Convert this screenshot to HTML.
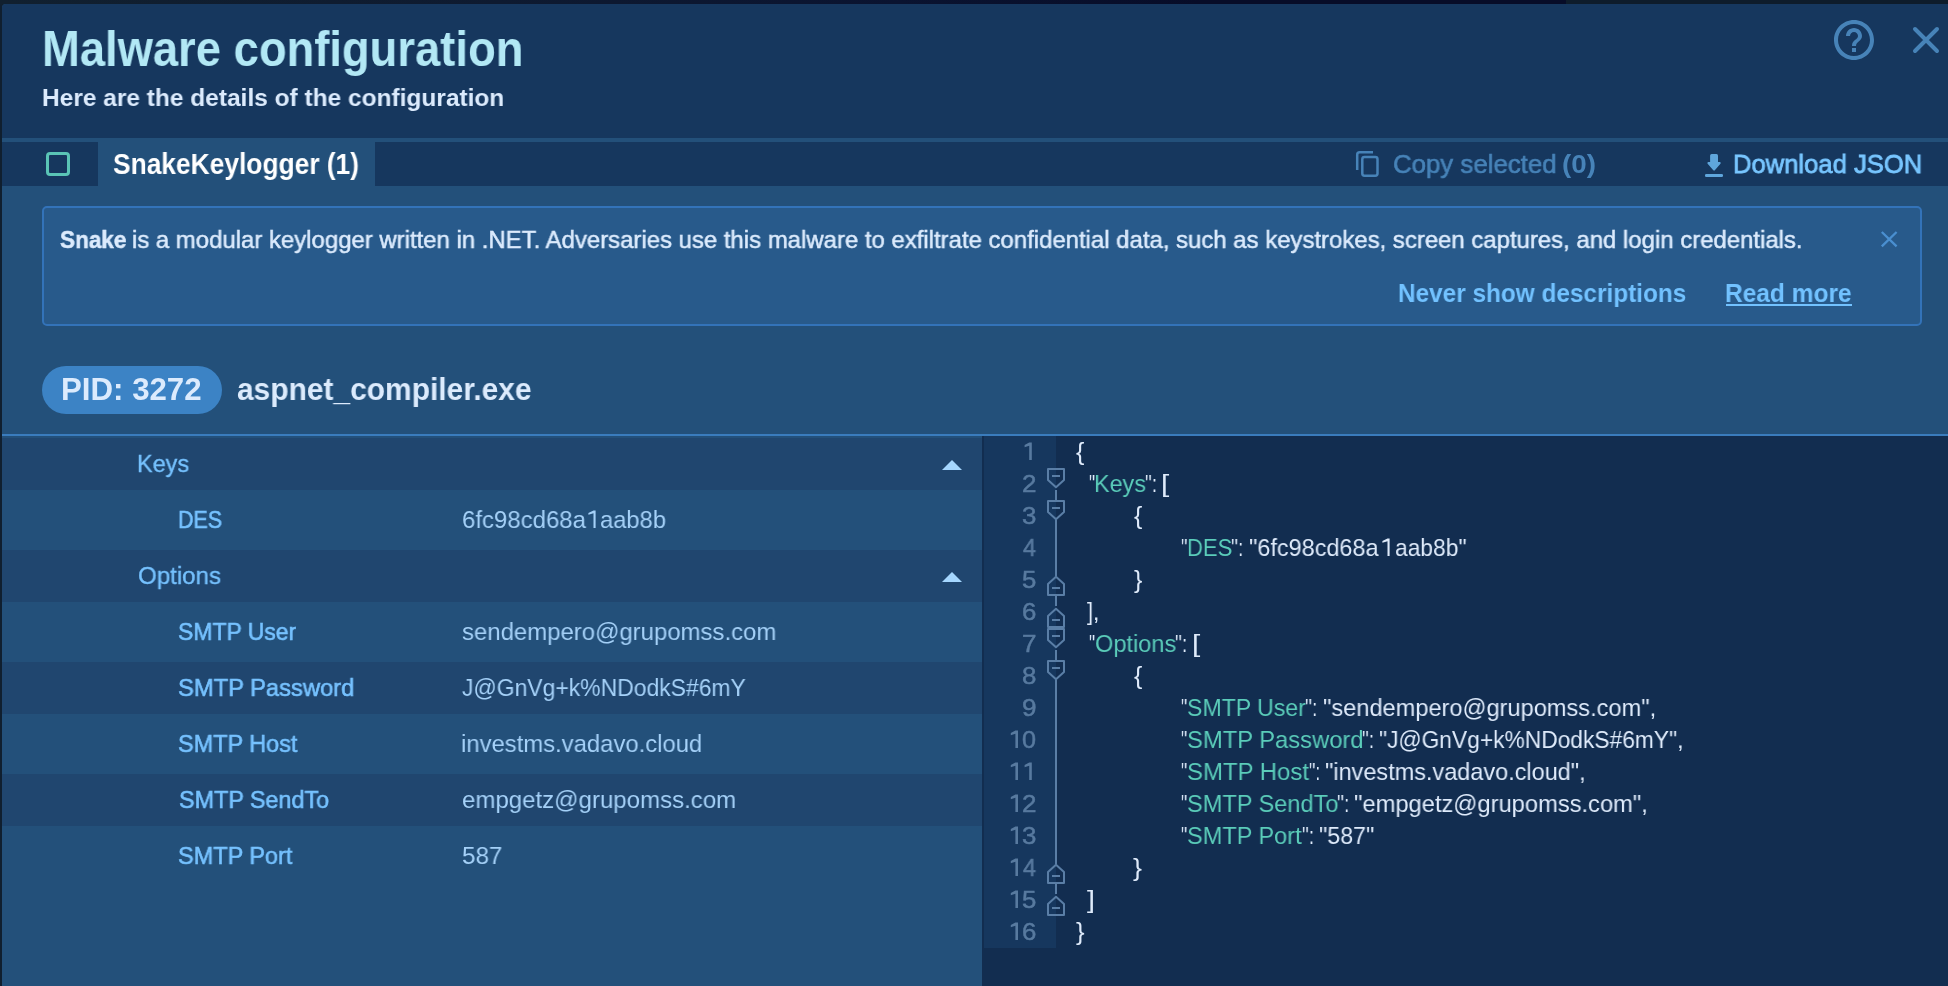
<!DOCTYPE html>
<html><head><meta charset="utf-8"><title>Malware configuration</title>
<style>
html,body{margin:0;padding:0;}
body{width:1948px;height:986px;overflow:hidden;background:#101f2f;position:relative;font-family:"Liberation Sans", sans-serif;}
.abs{position:absolute;}
.t{position:absolute;white-space:nowrap;line-height:1;transform-origin:0 0;display:block;will-change:transform;}
</style></head><body>
<div class="abs" style="left:0;top:0;width:1948px;height:5px;background:linear-gradient(90deg,#11202f 0,#0e1a30 500px,#0a1330 900px,#070c28 1200px,#070c28 1566px,#0e1c2b 1566px)"></div>
<div class="abs" style="left:2px;top:4px;width:1946px;height:982px;background:#23507a;border-radius:4px 0 0 0;overflow:hidden">
  <div class="abs" style="left:0;top:0;width:1946px;height:134px;background:#16375e"></div>
  <div class="abs" style="left:0;top:138px;width:1946px;height:44px;background:#16375e"></div>
  <div class="abs" style="left:96px;top:138px;width:277px;height:44px;background:#23507a"></div>
</div>
<div class="abs" style="left:46px;top:152px;width:18px;height:18px;border:3px solid #5ac4b6;border-radius:4px"></div>
<div class="abs" style="left:42px;top:206px;width:1876px;height:116px;border:2px solid #3373b9;border-radius:5px;background:#285a8b"></div>
<div class="abs" style="left:1726px;top:304px;width:126px;height:2px;background:#72c2ff"></div>
<div class="abs" style="left:42px;top:366px;width:180px;height:48px;border-radius:24px;background:#3c83c5"></div>
<div class="abs" style="left:2px;top:434px;width:1946px;height:2px;background:#3a7cbd"></div>
<div class="abs" style="left:2px;top:438px;width:980px;height:52px;background:#20466f"></div>
<div class="abs" style="left:2px;top:550px;width:980px;height:52px;background:#20466f"></div>
<div class="abs" style="left:2px;top:662px;width:980px;height:52px;background:#20466f"></div>
<div class="abs" style="left:2px;top:774px;width:980px;height:52px;background:#20466f"></div>
<div class="abs" style="left:982px;top:436px;width:966px;height:550px;background:#122d50"></div>
<div class="abs" style="left:984px;top:436px;width:72px;height:512px;background:#16375e"></div>
<svg class="abs" style="left:0;top:0" width="1948" height="986" viewBox="0 0 1948 986" fill="none" stroke="#5a7ea6" stroke-width="2" stroke-linejoin="round"><path d="M1048 469H1064V480L1056 487.3L1048 480Z"/><path d="M1052 476H1060"/><path d="M1048 501H1064V512L1056 519.3L1048 512Z"/><path d="M1052 508H1060"/><path d="M1048 629H1064V640L1056 647.3L1048 640Z"/><path d="M1052 636H1060"/><path d="M1048 661H1064V672L1056 679.3L1048 672Z"/><path d="M1052 668H1060"/><path d="M1056 576.7L1064 584V595H1048V584Z"/><path d="M1052 588H1060"/><path d="M1056 608.7L1064 616V627H1048V616Z"/><path d="M1052 620H1060"/><path d="M1056 864.7L1064 872V883H1048V872Z"/><path d="M1052 876H1060"/><path d="M1056 896.7L1064 904V915H1048V904Z"/><path d="M1052 908H1060"/><path d="M1056 490V500"/><path d="M1056 520V576"/><path d="M1056 596V606"/><path d="M1056 650V660"/><path d="M1056 680V864"/><path d="M1056 884V894"/></svg>
<svg class="abs" style="left:0;top:0" width="1948" height="986" viewBox="0 0 1948 986" fill="#587a9f"><path fill="#a5d1f8" d="M593.5 510.4H595.6V528H593.5V513.2L588.4 514.8V513Z"/><path fill="#587a9f" d="M1029.2 442.4H1031.8V460H1029.2V445.7L1024.6 447.3V445Z"/><path fill="#587a9f" d="M1015.4 730.4H1018V748H1015.4V733.7L1010.8 735.3V733Z"/><path fill="#587a9f" d="M1015.4 762.4H1018V780H1015.4V765.7L1010.8 767.3V765Z"/><path fill="#587a9f" d="M1029.2 762.4H1031.8V780H1029.2V765.7L1024.6 767.3V765Z"/><path fill="#587a9f" d="M1015.4 794.4H1018V812H1015.4V797.7L1010.8 799.3V797Z"/><path fill="#587a9f" d="M1015.4 826.4H1018V844H1015.4V829.7L1010.8 831.3V829Z"/><path fill="#587a9f" d="M1015.4 858.4H1018V876H1015.4V861.7L1010.8 863.3V861Z"/><path fill="#587a9f" d="M1015.4 890.4H1018V908H1015.4V893.7L1010.8 895.3V893Z"/><path fill="#587a9f" d="M1015.4 922.4H1018V940H1015.4V925.7L1010.8 927.3V925Z"/><path fill="#dfebfb" d="M1387.5 538.4H1389.6V556H1387.5V541.2L1382.4 542.8V541Z"/></svg>
<svg class="abs" style="left:0;top:0" width="1948" height="986" viewBox="0 0 1948 986">
  <g transform="translate(1830 16) scale(2)" fill="#4783b8"><path d="M11 18h2v-2h-2v2zm1-16C6.48 2 2 6.48 2 12s4.48 10 10 10 10-4.48 10-10S17.52 2 12 2zm0 18c-4.41 0-8-3.59-8-8s3.59-8 8-8 8 3.59 8 8-3.59 8-8 8zm0-14c-2.21 0-4 1.79-4 4h2c0-1.1.9-2 2-2s2 .9 2 2c0 2-3 1.75-3 5h2c0-2.25 3-2.5 3-5 0-2.21-1.79-4-4-4z"/></g>
  <path d="M1915 29L1937 51M1937 29L1915 51" stroke="#4783b8" stroke-width="4" stroke-linecap="round" fill="none"/>
  <g fill="none" stroke="#4783b8" stroke-width="2.5">
    <path d="M1357.2 170V154.7a2.5 2.5 0 0 1 2.5-2.5H1373"/>
    <rect x="1362.3" y="157" width="15.2" height="18.8" rx="2.2"/>
  </g>
  <g fill="#5fa6dc">
    <path d="M1710.1 155.5a1.5 1.5 0 0 1 1.5-1.5h4.9a1.5 1.5 0 0 1 1.5 1.5V163h-7.9Z"/>
    <path d="M1708.4 163.1H1719.7L1714.05 169.6Z" stroke="#5fa6dc" stroke-width="2" stroke-linejoin="round"/>
    <rect x="1705" y="174" width="18" height="3" rx="1.2"/>
  </g>
  <path d="M1881.8 232L1896.6 246.4M1896.6 232L1881.8 246.4" stroke="#4a8fd0" stroke-width="2.3" fill="none"/>
  <path d="M942 470L952 460L962 470Z" fill="#a5d7ff"/>
  <path d="M942 582L952 572L962 582Z" fill="#a5d7ff"/>
</svg>
<span class="t" style="left:42.23px;top:24.00px;font-size:49.2px;font-weight:700;color:#b2e8f5;transform:scaleX(0.9222)">Malware configuration</span>
<span class="t" style="left:42.00px;top:86.00px;font-size:24.6px;font-weight:700;color:#dcebfd;transform:scaleX(0.9950)">Here are the details of the configuration</span>
<span class="t" style="left:113.42px;top:150.00px;font-size:28.7px;font-weight:700;color:#ffffff;transform:scaleX(0.9185)">SnakeKeylogger (1)</span>
<span class="t" style="left:1392.81px;top:151.00px;font-size:26.65px;font-weight:400;color:#4783b8;-webkit-text-stroke:0.6px #4783b8;transform:scaleX(0.9689)">Copy selected</span>
<span class="t" style="left:1562.25px;top:151.00px;font-size:26.65px;font-weight:700;color:#4783b8;transform:scaleX(1.0431)">(0)</span>
<span class="t" style="left:1732.96px;top:151.00px;font-size:26.65px;font-weight:400;color:#78c6ff;-webkit-text-stroke:0.8px #78c6ff;transform:scaleX(0.9607)">Download JSON</span>
<span class="t" style="left:59.82px;top:228.00px;font-size:24.6px;font-weight:700;color:#dcebfd;-webkit-text-stroke:0.5px #dcebfd;transform:scaleX(0.9169)">Snake</span>
<span class="t" style="left:132.18px;top:228.00px;font-size:24.6px;font-weight:400;color:#dcebfd;-webkit-text-stroke:0.5px #dcebfd;transform:scaleX(0.9730)">is a modular keylogger written in .NET. Adversaries use this malware to exfiltrate confidential data, such as keystrokes, screen captures, and login credentials.</span>
<span class="t" style="left:1398.08px;top:280.00px;font-size:26.65px;font-weight:700;color:#72c2ff;transform:scaleX(0.9143)">Never show descriptions</span>
<span class="t" style="left:1725.48px;top:280.00px;font-size:26.65px;font-weight:700;color:#72c2ff;transform:scaleX(0.9200)">Read more</span>
<span class="t" style="left:61.41px;top:375.00px;font-size:30.75px;font-weight:700;color:#dcebfd;transform:scaleX(1.0156)">PID: 3272</span>
<span class="t" style="left:237.39px;top:375.00px;font-size:30.75px;font-weight:700;color:#dcebfd;transform:scaleX(0.9736)">aspnet_compiler.exe</span>
<span class="t" style="left:136.87px;top:452.00px;font-size:24.6px;font-weight:400;color:#76c2ff;-webkit-text-stroke:0.35px #76c2ff;transform:scaleX(0.9524)">Keys</span>
<span class="t" style="left:177.73px;top:508.00px;font-size:24.6px;font-weight:400;color:#76c2ff;-webkit-text-stroke:0.6px #76c2ff;transform:scaleX(0.8700)">DES</span>
<span class="t" style="left:461.81px;top:508.00px;font-size:24.6px;font-weight:400;color:#a5d1f8;transform:scaleX(0.9745)">6fc98cd68a</span>
<span class="t" style="left:600.32px;top:508.00px;font-size:24.6px;font-weight:400;color:#a5d1f8;transform:scaleX(0.9648)">aab8b</span>
<span class="t" style="left:138.01px;top:564.00px;font-size:24.6px;font-weight:400;color:#76c2ff;-webkit-text-stroke:0.35px #76c2ff;transform:scaleX(0.9796)">Options</span>
<span class="t" style="left:177.95px;top:620.00px;font-size:24.6px;font-weight:400;color:#76c2ff;-webkit-text-stroke:0.6px #76c2ff;transform:scaleX(0.9330)">SMTP User</span>
<span class="t" style="left:461.56px;top:620.00px;font-size:24.6px;font-weight:400;color:#a5d1f8;transform:scaleX(0.9733)">sendempero@grupomss.com</span>
<span class="t" style="left:177.89px;top:676.00px;font-size:24.6px;font-weight:400;color:#76c2ff;-webkit-text-stroke:0.6px #76c2ff;transform:scaleX(0.9651)">SMTP Password</span>
<span class="t" style="left:461.59px;top:676.00px;font-size:24.6px;font-weight:400;color:#a5d1f8;transform:scaleX(0.9322)">J@GnVg+k%NDodkS#6mY</span>
<span class="t" style="left:178.28px;top:732.00px;font-size:24.6px;font-weight:400;color:#76c2ff;-webkit-text-stroke:0.6px #76c2ff;transform:scaleX(0.9524)">SMTP Host</span>
<span class="t" style="left:461.17px;top:732.00px;font-size:24.6px;font-weight:400;color:#a5d1f8;transform:scaleX(0.9697)">investms.vadavo.cloud</span>
<span class="t" style="left:178.55px;top:788.00px;font-size:24.6px;font-weight:400;color:#76c2ff;-webkit-text-stroke:0.6px #76c2ff;transform:scaleX(0.9491)">SMTP SendTo</span>
<span class="t" style="left:462.00px;top:788.00px;font-size:24.6px;font-weight:400;color:#a5d1f8;transform:scaleX(0.9772)">empgetz@grupomss.com</span>
<span class="t" style="left:177.89px;top:844.00px;font-size:24.6px;font-weight:400;color:#76c2ff;-webkit-text-stroke:0.6px #76c2ff;transform:scaleX(0.9544)">SMTP Port</span>
<span class="t" style="left:461.99px;top:844.00px;font-size:24.6px;font-weight:400;color:#a5d1f8;transform:scaleX(0.9854)">587</span>
<span class="t" style="left:1022.22px;top:472.00px;font-size:24.6px;font-weight:400;color:#587a9f;-webkit-text-stroke:0.5px #587a9f;transform:scaleX(1.0582)">2</span>
<span class="t" style="left:1021.85px;top:504.00px;font-size:24.6px;font-weight:400;color:#587a9f;-webkit-text-stroke:0.5px #587a9f;transform:scaleX(1.0532)">3</span>
<span class="t" style="left:1023.03px;top:536.00px;font-size:24.6px;font-weight:400;color:#587a9f;-webkit-text-stroke:0.5px #587a9f;transform:scaleX(0.9557)">4</span>
<span class="t" style="left:1022.26px;top:568.00px;font-size:24.6px;font-weight:400;color:#587a9f;-webkit-text-stroke:0.5px #587a9f;transform:scaleX(1.0480)">5</span>
<span class="t" style="left:1021.84px;top:600.00px;font-size:24.6px;font-weight:400;color:#587a9f;-webkit-text-stroke:0.5px #587a9f;transform:scaleX(1.0503)">6</span>
<span class="t" style="left:1022.20px;top:632.00px;font-size:24.6px;font-weight:400;color:#587a9f;-webkit-text-stroke:0.5px #587a9f;transform:scaleX(1.0592)">7</span>
<span class="t" style="left:1022.26px;top:664.00px;font-size:24.6px;font-weight:400;color:#587a9f;-webkit-text-stroke:0.5px #587a9f;transform:scaleX(1.0528)">8</span>
<span class="t" style="left:1022.19px;top:696.00px;font-size:24.6px;font-weight:400;color:#587a9f;-webkit-text-stroke:0.5px #587a9f;transform:scaleX(1.0610)">9</span>
<span class="t" style="left:1022.12px;top:728.00px;font-size:24.6px;font-weight:400;color:#587a9f;-webkit-text-stroke:0.5px #587a9f;transform:scaleX(1.0251)">0</span>
<span class="t" style="left:1022.22px;top:792.00px;font-size:24.6px;font-weight:400;color:#587a9f;-webkit-text-stroke:0.5px #587a9f;transform:scaleX(1.0582)">2</span>
<span class="t" style="left:1021.85px;top:824.00px;font-size:24.6px;font-weight:400;color:#587a9f;-webkit-text-stroke:0.5px #587a9f;transform:scaleX(1.0532)">3</span>
<span class="t" style="left:1023.03px;top:856.00px;font-size:24.6px;font-weight:400;color:#587a9f;-webkit-text-stroke:0.5px #587a9f;transform:scaleX(0.9557)">4</span>
<span class="t" style="left:1022.26px;top:888.00px;font-size:24.6px;font-weight:400;color:#587a9f;-webkit-text-stroke:0.5px #587a9f;transform:scaleX(1.0480)">5</span>
<span class="t" style="left:1021.84px;top:920.00px;font-size:24.6px;font-weight:400;color:#587a9f;-webkit-text-stroke:0.5px #587a9f;transform:scaleX(1.0503)">6</span>
<span class="t" style="left:1075.54px;top:440.00px;font-size:24.6px;font-weight:400;color:#dfebfb;transform:scaleX(1.0243)">{</span>
<span class="t" style="left:1133.97px;top:504.00px;font-size:24.6px;font-weight:400;color:#dfebfb;transform:scaleX(1.0198)">{</span>
<span class="t" style="left:1133.97px;top:568.00px;font-size:24.6px;font-weight:400;color:#dfebfb;transform:scaleX(1.0206)">}</span>
<span class="t" style="left:1087.46px;top:600.00px;font-size:24.6px;font-weight:400;color:#dfebfb;transform:scaleX(0.8997)">],</span>
<span class="t" style="left:1133.97px;top:664.00px;font-size:24.6px;font-weight:400;color:#dfebfb;transform:scaleX(1.0198)">{</span>
<span class="t" style="left:1133.21px;top:856.00px;font-size:24.6px;font-weight:400;color:#dfebfb;transform:scaleX(1.0933)">}</span>
<span class="t" style="left:1087.47px;top:888.00px;font-size:24.6px;font-weight:400;color:#dfebfb;transform:scaleX(1.1591)">]</span>
<span class="t" style="left:1076.03px;top:920.00px;font-size:24.6px;font-weight:400;color:#dfebfb;transform:scaleX(1.0437)">}</span>
<span class="t" style="left:1088.66px;top:472.00px;font-size:24.6px;font-weight:400;color:#dfebfb;transform:scaleX(0.6917)">"</span>
<span class="t" style="left:1094.24px;top:472.00px;font-size:24.6px;font-weight:400;color:#5bcdba;transform:scaleX(0.9490)">Keys</span>
<span class="t" style="left:1145.19px;top:472.00px;font-size:24.6px;font-weight:400;color:#dfebfb;transform:scaleX(0.7737)">":</span>
<span class="t" style="left:1161.33px;top:472.00px;font-size:24.6px;font-weight:400;color:#dfebfb;transform:scaleX(1.2101)">[</span>
<span class="t" style="left:1180.97px;top:536.00px;font-size:24.6px;font-weight:400;color:#dfebfb;transform:scaleX(0.7278)">"</span>
<span class="t" style="left:1186.87px;top:536.00px;font-size:24.6px;font-weight:400;color:#5bcdba;transform:scaleX(0.8947)">DES</span>
<span class="t" style="left:1230.97px;top:536.00px;font-size:24.6px;font-weight:400;color:#dfebfb;transform:scaleX(0.7942)">":</span>
<span class="t" style="left:1249.22px;top:536.00px;font-size:24.6px;font-weight:400;color:#dfebfb;transform:scaleX(0.9532)">"6fc98cd68a</span>
<span class="t" style="left:1394.87px;top:536.00px;font-size:24.6px;font-weight:400;color:#dfebfb;transform:scaleX(0.9272)">aab8b"</span>
<span class="t" style="left:1088.66px;top:632.00px;font-size:24.6px;font-weight:400;color:#dfebfb;transform:scaleX(0.6917)">"</span>
<span class="t" style="left:1094.95px;top:632.00px;font-size:24.6px;font-weight:400;color:#5bcdba;transform:scaleX(0.9584)">Options</span>
<span class="t" style="left:1175.07px;top:632.00px;font-size:24.6px;font-weight:400;color:#dfebfb;transform:scaleX(0.7856)">":</span>
<span class="t" style="left:1192.33px;top:632.00px;font-size:24.6px;font-weight:400;color:#dfebfb;transform:scaleX(1.2101)">[</span>
<span class="t" style="left:1181.19px;top:696.00px;font-size:24.6px;font-weight:400;color:#dfebfb;transform:scaleX(0.7060)">"</span>
<span class="t" style="left:1187.23px;top:696.00px;font-size:24.6px;font-weight:400;color:#5bcdba;transform:scaleX(0.9381)">SMTP User</span>
<span class="t" style="left:1305.28px;top:696.00px;font-size:24.6px;font-weight:400;color:#dfebfb;transform:scaleX(0.7942)">":</span>
<span class="t" style="left:1322.64px;top:696.00px;font-size:24.6px;font-weight:400;color:#dfebfb;transform:scaleX(0.9593)">"sendempero@grupomss.com",</span>
<span class="t" style="left:1181.19px;top:728.00px;font-size:24.6px;font-weight:400;color:#dfebfb;transform:scaleX(0.7060)">"</span>
<span class="t" style="left:1186.79px;top:728.00px;font-size:24.6px;font-weight:400;color:#5bcdba;transform:scaleX(0.9664)">SMTP Password</span>
<span class="t" style="left:1361.99px;top:728.00px;font-size:24.6px;font-weight:400;color:#dfebfb;transform:scaleX(0.7737)">":</span>
<span class="t" style="left:1379.45px;top:728.00px;font-size:24.6px;font-weight:400;color:#dfebfb;transform:scaleX(0.9260)">"J@GnVg+k%NDodkS#6mY",</span>
<span class="t" style="left:1181.19px;top:760.00px;font-size:24.6px;font-weight:400;color:#dfebfb;transform:scaleX(0.7060)">"</span>
<span class="t" style="left:1186.53px;top:760.00px;font-size:24.6px;font-weight:400;color:#5bcdba;transform:scaleX(0.9729)">SMTP Host</span>
<span class="t" style="left:1308.88px;top:760.00px;font-size:24.6px;font-weight:400;color:#dfebfb;transform:scaleX(0.7227)">":</span>
<span class="t" style="left:1325.46px;top:760.00px;font-size:24.6px;font-weight:400;color:#dfebfb;transform:scaleX(0.9544)">"investms.vadavo.cloud",</span>
<span class="t" style="left:1181.19px;top:792.00px;font-size:24.6px;font-weight:400;color:#dfebfb;transform:scaleX(0.7060)">"</span>
<span class="t" style="left:1186.83px;top:792.00px;font-size:24.6px;font-weight:400;color:#5bcdba;transform:scaleX(0.9575)">SMTP SendTo</span>
<span class="t" style="left:1337.28px;top:792.00px;font-size:24.6px;font-weight:400;color:#dfebfb;transform:scaleX(0.7942)">":</span>
<span class="t" style="left:1354.05px;top:792.00px;font-size:24.6px;font-weight:400;color:#dfebfb;transform:scaleX(0.9639)">"empgetz@grupomss.com",</span>
<span class="t" style="left:1181.19px;top:824.00px;font-size:24.6px;font-weight:400;color:#dfebfb;transform:scaleX(0.7060)">"</span>
<span class="t" style="left:1187.10px;top:824.00px;font-size:24.6px;font-weight:400;color:#5bcdba;transform:scaleX(0.9564)">SMTP Port</span>
<span class="t" style="left:1301.78px;top:824.00px;font-size:24.6px;font-weight:400;color:#dfebfb;transform:scaleX(0.7737)">":</span>
<span class="t" style="left:1319.15px;top:824.00px;font-size:24.6px;font-weight:400;color:#dfebfb;transform:scaleX(0.9453)">"587"</span>
</body></html>
